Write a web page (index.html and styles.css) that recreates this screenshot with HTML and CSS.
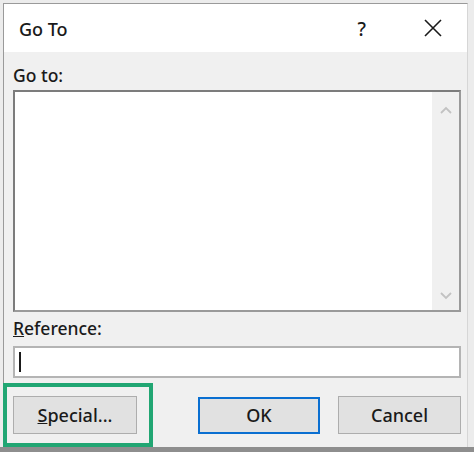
FILE: index.html
```html
<!DOCTYPE html>
<html>
<head>
<meta charset="utf-8">
<link rel="stylesheet" href="styles.css">
</head>
<body>
<div class="dialog">
  <div class="titlebar">
    <span class="title">Go To</span>
    <span class="help">?</span>
    <svg class="close" width="18" height="18" viewBox="0 0 18 18"><path d="M1 1L17 17M17 1L1 17" stroke="#1a1a1a" stroke-width="1.6" fill="none"/></svg>
  </div>
  <div class="content">
    <div class="label">Go to:</div>
    <div class="listbox">
      <div class="listarea"></div>
      <div class="scrollbar">
        <svg width="12" height="8" viewBox="0 0 12 8"><path d="M1 7L6 2L11 7" stroke="#c2c2c2" stroke-width="1.8" fill="none"/></svg>
        <svg width="12" height="8" viewBox="0 0 12 8"><path d="M1 1L6 6L11 1" stroke="#c2c2c2" stroke-width="1.8" fill="none"/></svg>
      </div>
    </div>
    <div class="label ref"><u>R</u>eference:</div>
    <div class="input"><span class="caret"></span></div>
    <div class="buttons">
      <button class="btn special"><u>S</u>pecial...</button>
      <button class="btn ok">OK</button>
      <button class="btn cancel">Cancel</button>
    </div>
  </div>
  <div class="highlight"></div>
</div>
<div class="bottomline"></div>
</body>
</html>
```
FILE: styles.css
```css
html, body {
  margin: 0;
  padding: 0;
}
body {
  width: 474px;
  height: 452px;
  background: #ececec;
  font-family: "Noto Sans", "Open Sans", sans-serif;
  color: #1a1a1a;
  overflow: hidden;
  position: relative;
}
.dialog {
  position: relative;
  margin: 3px 0 0 3px;
  width: 463px;
  height: 443px;
  border-left: 1px solid #9a9a9a;
  border-right: 1px solid #d6d6d6;
  border-top: 1px solid #9a9a9a;
  background: #f0f0f0;
  display: flex;
  flex-direction: column;
}
.titlebar {
  height: 48px;
  background: #ffffff;
  display: flex;
  align-items: center;
  padding-left: 15px;
  flex-shrink: 0;
}
.title {
  font-size: 18px;
  font-weight: 500;
  flex: 1;
  padding-top: 1px;
}
.help {
  font-size: 19px;
  font-weight: 500;
  margin-right: 58px;
  padding-top: 1px;
}
.close {
  margin-right: 25px;
}
.content {
  padding: 11px 6px 0 9px;
  display: flex;
  flex-direction: column;
}
.label {
  font-size: 17.5px;
  font-weight: 500;
  line-height: 24px;
  height: 24px;
  margin-bottom: 3px;
}
.label.ref {
  margin-top: 4px;
  margin-bottom: 6px;
}
.listbox {
  height: 218px;
  border: 2px solid #8c8c8c;
  border-color: #7c7c7c #9a9a9a #9a9a9a #7c7c7c;
  background: #ffffff;
  display: flex;
}
.listarea {
  flex: 1;
}
.scrollbar {
  width: 27px;
  background: #f0f0f0;
  display: flex;
  flex-direction: column;
  justify-content: space-between;
  align-items: center;
  padding: 14px 0 10px;
}
.input {
  height: 28px;
  border: 2px solid #b4b4b4;
  background: #ffffff;
  display: flex;
  align-items: center;
  padding-left: 4px;
}
.caret {
  width: 1.5px;
  height: 20px;
  background: #1a1a1a;
}
.buttons {
  margin-top: 18px;
  display: flex;
  align-items: center;
}
.btn {
  font-family: "Noto Sans", "Open Sans", sans-serif;
  font-size: 18px;
  font-weight: 500;
  color: #1a1a1a;
  background: #e1e1e1;
  border: 1px solid #adadad;
  height: 38px;
  padding: 0;
}
.special {
  width: 124px;
}
.ok {
  width: 122px;
  margin-left: 61px;
  border: 2px solid #0a6fd1;
  height: 37px;
}
.cancel {
  width: 123px;
  margin-left: 18px;
}
.highlight {
  position: absolute;
  left: -1px;
  top: 379px;
  width: 142px;
  height: 56px;
  border: 4px solid #21a673;
}
.bottomline {
  position: absolute;
  left: 0;
  top: 447px;
  width: 474px;
  height: 5px;
  background: #8e8e8e;
}
```
